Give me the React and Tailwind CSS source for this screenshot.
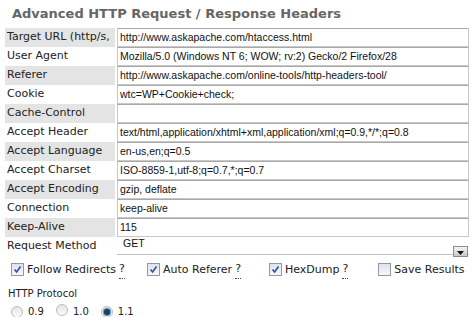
import React from 'react';

const rows = [
  ['Target URL (http/s,', 'http://www.askapache.com/htaccess.html'],
  ['User Agent', 'Mozilla/5.0 (Windows NT 6; WOW; rv:2) Gecko/2 Firefox/28'],
  ['Referer', 'http://www.askapache.com/online-tools/http-headers-tool/'],
  ['Cookie', 'wtc=WP+Cookie+check;'],
  ['Cache-Control', ''],
  ['Accept Header', 'text/html,application/xhtml+xml,application/xml;q=0.9,*/*;q=0.8'],
  ['Accept Language', 'en-us,en;q=0.5'],
  ['Accept Charset', 'ISO-8859-1,utf-8;q=0.7,*;q=0.7'],
  ['Accept Encoding', 'gzip, deflate'],
  ['Connection', 'keep-alive'],
  ['Keep-Alive', '115'],
];

const label = { fontFamily: '"DejaVu Sans", Verdana, sans-serif' };
const field = { fontFamily: '"Liberation Sans", Arial, sans-serif' };

function Check({ checked }) {
  return (
    <span className="inline-flex h-[13px] w-[13px] items-center justify-center border border-[#8f9aa8] bg-gradient-to-b from-[#dfe3ea] to-[#f6f7f9]">
      {checked && (
        <svg width="9" height="9" viewBox="0 0 9 9">
          <path d="M1.5 4.5 L3.6 7 L7.5 1.5" fill="none" stroke="#2b4fa8" strokeWidth="1.6" />
        </svg>
      )}
    </span>
  );
}

function Radio({ checked }) {
  return (
    <span className="inline-flex h-[12px] w-[12px] items-center justify-center rounded-full border border-[#b8bcc2] bg-gradient-to-b from-[#e4e6e9] to-[#fafafa]">
      {checked && <span className="h-[6px] w-[6px] rounded-full bg-[#1d3f5e] ring-1 ring-[#5a8fb8]" />}
    </span>
  );
}

export default function App() {
  return (
    <div className="h-[317px] w-[474px] overflow-hidden bg-white" style={label}>
      <h1 className="pl-[12px] pt-[4px] text-[13px] font-bold leading-[20px] text-[#666666]">
        Advanced HTTP Request / Response Headers
      </h1>
      <div className="mt-[4px] flex flex-col pl-[5px]">
        {rows.map(([name, value], i) => (
          <div key={name} className="flex h-[19px]">
            <div className={`flex w-[110px] shrink-0 items-center pl-[2px] text-[11px] text-[#222] ${i % 2 === 0 ? 'bg-[#e4e4e4]' : 'bg-white'}`}>
              {name}
            </div>
            <div className="ml-[2px] flex w-[352px] items-center border border-[#c8c8c8] border-t-[#a8a8a8] bg-white pl-[2px] text-[10.5px] text-[#111] whitespace-nowrap overflow-hidden" style={field}>
              {value}
            </div>
          </div>
        ))}
        <div className="flex h-[18px]">
          <div className="flex w-[110px] shrink-0 items-center pl-[2px] text-[11px] text-[#222]">Request Method</div>
          <div className="relative ml-[2px] flex w-[352px] items-start border-b border-[#c0c0c0] pl-[6px] text-[10.5px] leading-[13px] text-[#111]" style={field}>
            GET
            <span className="absolute bottom-[-3px] right-[1px] flex h-[11px] w-[15px] items-end justify-center border border-[#8c8c8c] bg-gradient-to-b from-[#f4f4f4] to-[#c9c9c9] pb-[1px]">
              <svg width="7" height="4" viewBox="0 0 7 4"><path d="M0 0 H7 L3.5 4 Z" fill="#111" /></svg>
            </span>
          </div>
        </div>
      </div>
      <div className="mt-[6px] flex items-center pl-[11px] text-[11px] text-[#222]">
        <label className="flex items-center gap-[3px]"><Check checked /> Follow Redirects <span className="border-b border-dotted border-[#444]">?</span></label>
        <label className="ml-[22px] flex items-center gap-[3px]"><Check checked /> Auto Referer <span className="border-b border-dotted border-[#444]">?</span></label>
        <label className="ml-[28px] flex items-center gap-[3px]"><Check checked /> HexDump <span className="border-b border-dotted border-[#444]">?</span></label>
        <label className="ml-[30px] flex items-center gap-[3px]"><Check /> Save Results</label>
      </div>
      <div className="mt-[7px] pl-[8px] text-[10px] text-[#222]">HTTP Protocol</div>
      <div className="mt-[3px] flex items-center pl-[11px] text-[10px] text-[#222]">
        <Radio /><span className="ml-[5px]">0.9</span>
        <span className="ml-[12px]"><Radio /></span><span className="ml-[5px]">1.0</span>
        <span className="ml-[12px]"><Radio checked /></span><span className="ml-[5px]">1.1</span>
      </div>
    </div>
  );
}
